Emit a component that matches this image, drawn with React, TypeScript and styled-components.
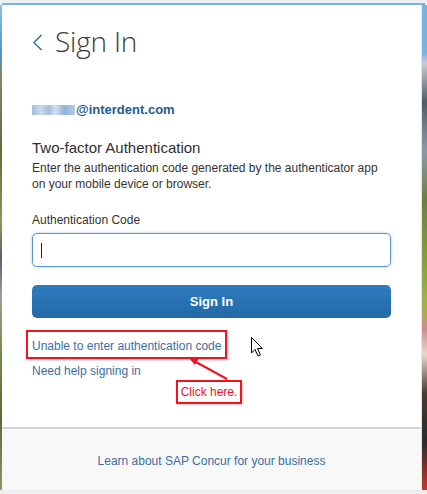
import React from 'react';
import styled, { createGlobalStyle } from 'styled-components';

const GlobalStyle = createGlobalStyle`
  html, body {
    margin: 0;
    padding: 0;
    background: #eceff2;
  }
  #root {
    width: 427px;
    height: 494px;
  }
`;

const Shell = styled.div`
  width: 427px;
  height: 494px;
  display: flex;
  flex-direction: column;
  background: #eef0f2;
  padding-top: 3px;
  box-sizing: border-box;
`;

const TopBar = styled.div`
  height: 2px;
  margin-left: 2px;
  margin-right: 2px;
  background: #7ab3e2;
`;

const Middle = styled.div`
  display: flex;
  flex: 1;
  min-height: 0;
`;

const Strip = styled.div<{ $side: 'left' | 'right' }>`
  width: ${p => (p.$side === 'left' ? '2px' : '5px')};
  background: ${p =>
    p.$side === 'left'
      ? 'linear-gradient(180deg, #8cc0e6 0%, #4f93c6 10%, #7f8a6a 14%, #5d6e3d 30%, #8a9a5a 45%, #5b5f70 52%, #9aa09a 60%, #718c4e 72%, #5a6a3a 85%, #889a6a 100%)'
      : 'linear-gradient(180deg, #7ab3e2 0%, #7ab3e2 10%, #c9ccd2 12%, #4d5d6a 20%, #8b9aa8 30%, #6c7f45 40%, #8aa63e 55%, #a4b44a 62%, #c98f8f 67%, #e9d8c8 72%, #4a3a30 80%, #2a2a2a 90%, #c03a2a 100%)'};
  border-left: ${p => (p.$side === 'right' ? '1px solid #e6e6e6' : 'none')};
`;

const Card = styled.div`
  flex: 1;
  background: #ffffff;
  display: flex;
  flex-direction: column;
  position: relative;
  font-family: 'Liberation Sans', Arial, sans-serif;
  color: #333333;
`;

const Main = styled.div`
  flex: 1;
  padding: 19px 30px 0 30px;
  display: flex;
  flex-direction: column;
`;

const Heading = styled.h1`
  margin: 0;
  display: flex;
  align-items: center;
  gap: 12px;
  font-family: 'Open Sans', sans-serif;
  font-weight: 300;
  font-size: 28px;
  line-height: 34px;
  color: #3c3c3c;
  letter-spacing: -0.2px;
`;

const Back = styled.svg`
  width: 11px;
  height: 17px;
  margin-top: 2px;
`;

const Email = styled.div`
  margin-top: 44px;
  display: flex;
  align-items: center;
  font-size: 13px;
  font-weight: 700;
  line-height: 16px;
  color: #245b8f;
`;

const Blur = styled.span`
  display: inline-block;
  width: 43px;
  height: 10px;
  margin-right: 1px;
  background: linear-gradient(90deg, #9fbfdd 0%, #c8d9ea 20%, #a3c1df 40%, #d4e1ee 55%, #8fb2d6 75%, #b6cde4 100%);
  filter: blur(0.6px);
`;

const SubTitle = styled.h2`
  margin: 20px 0 0 0;
  font-size: 15px;
  font-weight: 400;
  line-height: 19px;
  color: #2f2f2f;
`;

const Desc = styled.p`
  margin: 3px 0 0 0;
  font-size: 12px;
  line-height: 16px;
  color: #333333;
`;

const Label = styled.label`
  margin-top: 20px;
  font-size: 12px;
  line-height: 16px;
  color: #333333;
`;

const Input = styled.div`
  margin-top: 5px;
  height: 34px;
  box-sizing: border-box;
  border: 1px solid #5b96cf;
  border-radius: 5px;
  box-shadow: 0 0 3px rgba(82, 148, 214, 0.55);
  display: flex;
  align-items: center;
  padding-left: 8px;
`;

const Caret = styled.span`
  width: 1px;
  height: 15px;
  background: #222;
`;

const Button = styled.button`
  margin-top: 18px;
  height: 33px;
  border: none;
  border-radius: 5px;
  background: linear-gradient(180deg, #2e7cbf 0%, #2468a8 100%);
  color: #ffffff;
  font-family: 'Liberation Sans', Arial, sans-serif;
  font-weight: 700;
  font-size: 13px;
  padding: 0;
`;

const Links = styled.div`
  margin-top: 20px;
  display: flex;
  flex-direction: column;
  gap: 9px;
  align-items: flex-start;
`;

const Link = styled.a`
  font-size: 12px;
  line-height: 16px;
  color: #3b6ea7;
  text-decoration: none;
  position: relative;
`;

const Highlight = styled.span`
  position: absolute;
  left: -6px;
  top: -8px;
  right: -6px;
  bottom: -5px;
  border: 2px solid #f0141e;
  box-shadow: 1px 1px 2px rgba(0, 0, 0, 0.25);
`;

const Callout = styled.div`
  position: absolute;
  left: 174px;
  top: 375px;
  width: 62px;
  height: 20px;
  border: 2px solid #f0141e;
  background: #ffffff;
  color: #f0141e;
  font-size: 12px;
  line-height: 20px;
  text-align: center;
  box-shadow: 1px 1px 2px rgba(0, 0, 0, 0.2);
`;

const Overlay = styled.svg`
  position: absolute;
  left: 0;
  top: 0;
  pointer-events: none;
`;

const Footer = styled.div`
  height: 61px;
  border-top: 2px solid #d4d4d4;
  background: #f8f8f8;
  display: flex;
  align-items: center;
  justify-content: center;
`;

const FooterLink = styled.a`
  font-size: 12px;
  color: #3b6ea7;
  text-decoration: none;
  margin-top: 2px;
`;

const BottomBar = styled.div`
  height: 4px;
  background: #eeeeee;
`;

export default function App() {
  return (
    <>
      <GlobalStyle />
      <Shell>
        <TopBar />
        <Middle>
          <Strip $side="left" />
          <Card>
            <Main>
              <Heading>
                <Back viewBox="0 0 11 17">
                  <path d="M9.5 1 L2 8.5 L9.5 16" fill="none" stroke="#2a6aa8" strokeWidth="1.4" />
                </Back>
                Sign In
              </Heading>
              <Email>
                <Blur />
                @interdent.com
              </Email>
              <SubTitle>Two-factor Authentication</SubTitle>
              <Desc>
                Enter the authentication code generated by the authenticator app
                <br />
                on your mobile device or browser.
              </Desc>
              <Label>Authentication Code</Label>
              <Input>
                <Caret />
              </Input>
              <Button>Sign In</Button>
              <Links>
                <Link>
                  Unable to enter authentication code
                  <Highlight />
                </Link>
                <Link>Need help signing in</Link>
              </Links>
            </Main>
            <Footer>
              <FooterLink>Learn about SAP Concur for your business</FooterLink>
            </Footer>
            <Callout>Click here.</Callout>
            <Overlay width="420" height="430" viewBox="0 0 420 430">
              <line x1="225" y1="374" x2="192" y2="356" stroke="#f0141e" strokeWidth="2" />
              <path d="M186 352 L197 353 L193 360 Z" fill="#f0141e" />
              <path
                d="M249.5 332.5 L249.5 348 L253 344.5 L256 351 L258.5 350 L255.5 343.5 L260.5 343.5 Z"
                fill="#ffffff"
                stroke="#000000"
                strokeWidth="1"
                strokeLinejoin="round"
              />
            </Overlay>
          </Card>
          <Strip $side="right" />
        </Middle>
        <BottomBar />
      </Shell>
    </>
  );
}
